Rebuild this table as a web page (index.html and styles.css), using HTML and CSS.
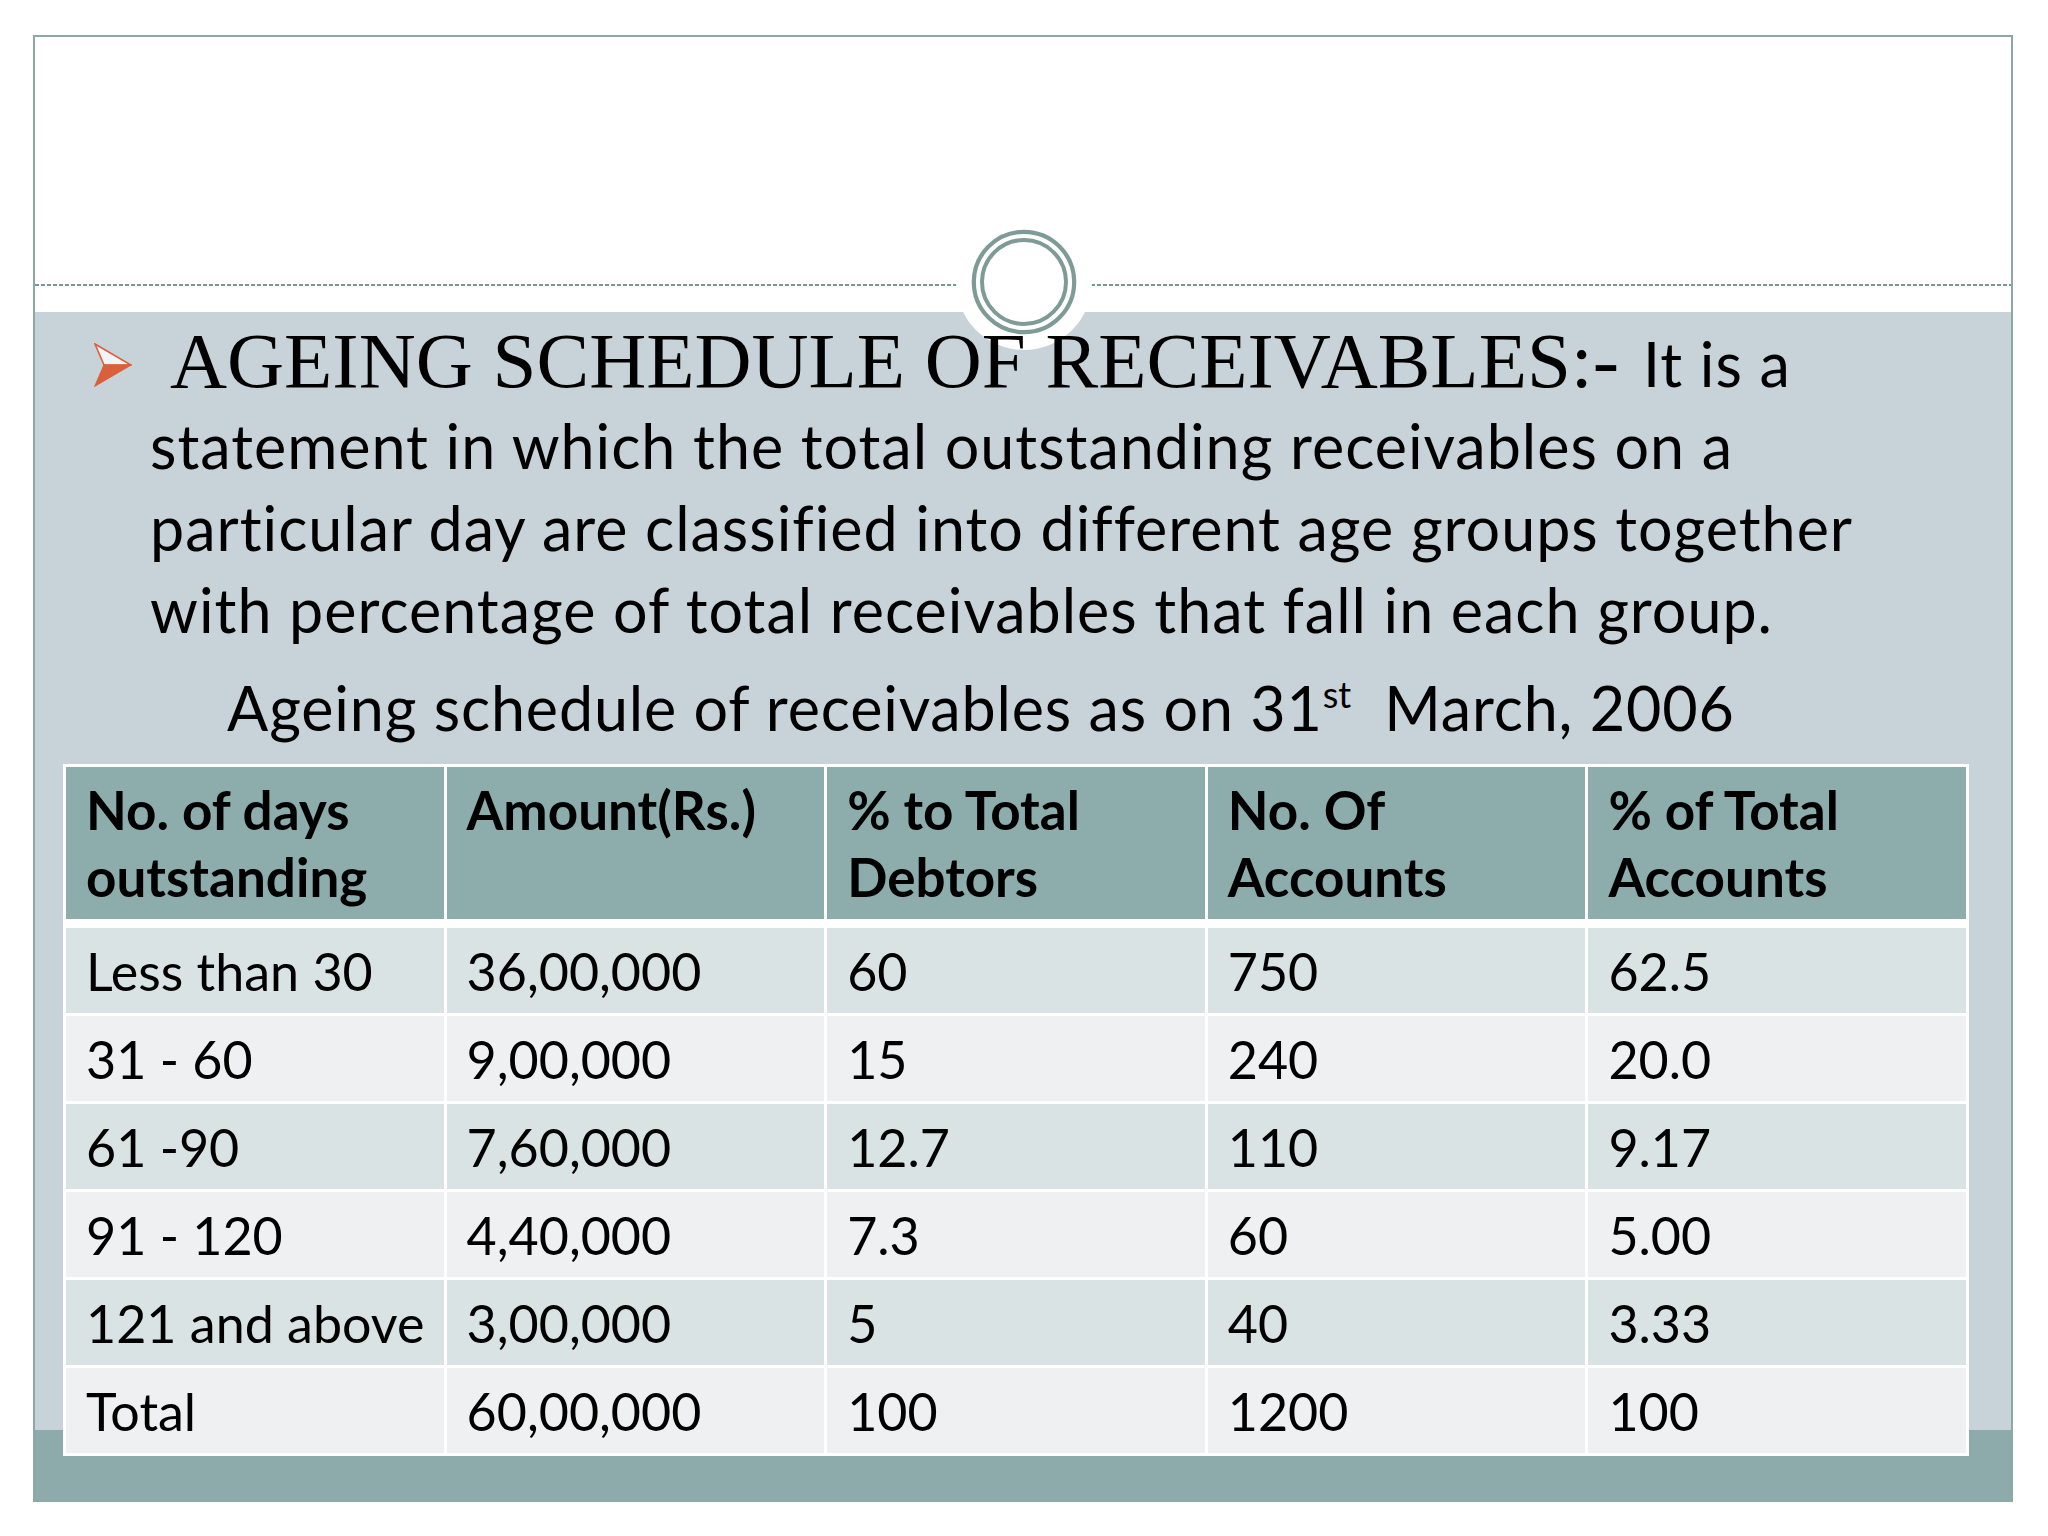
FILE: index.html
```html
<!DOCTYPE html>
<html>
<head>
<meta charset="utf-8">
<title>Ageing Schedule of Receivables</title>
<link rel="stylesheet" href="styles.css">
</head>
<body>
<div class="slide">
  <div class="header">
    <div class="dash"></div>
    <div class="halo">
      <svg width="136" height="136" viewBox="0 0 136 136">
        <circle cx="68" cy="68" r="50.2" fill="none" stroke="#7e9b95" stroke-width="4.2"/>
        <circle cx="68" cy="68" r="42" fill="none" stroke="#7e9b95" stroke-width="4"/>
      </svg>
    </div>
  </div>
  <div class="content">
    <p class="desc"><svg class="bullet" width="38" height="44" viewBox="0 0 38 44"><polygon points="1,1 37,22 10,22" fill="#f2f4f5" stroke="#d9603b" stroke-width="1.6" stroke-linejoin="miter"/><polygon points="10,22 37,22 1,43" fill="#d9603b" stroke="#d9603b" stroke-width="1.2"/></svg><span class="title">AGEING SCHEDULE OF RECEIVABLES:-</span><span class="lead">It is a</span> statement in which the total outstanding receivables on a particular day are classified into different age groups together with percentage of total receivables that fall in each group.</p>
    <p class="caption">Ageing schedule of receivables as on 31<sup>st</sup>&nbsp; March, 2006</p>
    <table class="ageing">
      <thead>
        <tr>
          <th>No. of days outstanding</th>
          <th>Amount(Rs.)</th>
          <th>% to Total Debtors</th>
          <th>No. Of Accounts</th>
          <th>% of Total Accounts</th>
        </tr>
      </thead>
      <tbody>
        <tr class="odd"><td>Less than 30</td><td>36,00,000</td><td>60</td><td>750</td><td>62.5</td></tr>
        <tr class="even"><td>31 - 60</td><td>9,00,000</td><td>15</td><td>240</td><td>20.0</td></tr>
        <tr class="odd"><td>61 -90</td><td>7,60,000</td><td>12.7</td><td>110</td><td>9.17</td></tr>
        <tr class="even"><td>91 - 120</td><td>4,40,000</td><td>7.3</td><td>60</td><td>5.00</td></tr>
        <tr class="odd"><td>121 and above</td><td>3,00,000</td><td>5</td><td>40</td><td>3.33</td></tr>
        <tr class="even"><td>Total</td><td>60,00,000</td><td>100</td><td>1200</td><td>100</td></tr>
      </tbody>
    </table>
  </div>
</div>
</body>
</html>
```

FILE: styles.css
```css
html, body {
  margin: 0;
  padding: 0;
  background: #ffffff;
}

body {
  width: 2048px;
  height: 1536px;
  overflow: hidden;
  font-family: Lato, "Liberation Sans", sans-serif;
  color: #000;
}

.slide {
  width: 1976px;
  height: 1463px;
  margin: 35px 0 0 33px;
  border: 2px solid #8ea8a4;
  background: linear-gradient(to bottom,
    #ffffff 0, #ffffff 275px,
    #c7d3d8 275px, #c7d3d8 1393px,
    #8dabab 1393px, #8dabab 100%);
  overflow: hidden;
}

.header {
  height: 275px;
  position: relative;
}

.dash {
  padding-top: 247px;
  height: 2px;
  background-clip: content-box;
  background-origin: content-box;
  background-image: repeating-linear-gradient(90deg, #7a9892 0, #7a9892 4px, transparent 4px, transparent 6px);
}

.halo {
  position: absolute;
  left: 921px;
  top: 177px;
  width: 136px;
  height: 136px;
  border-radius: 50%;
  background: #ffffff;
}

.halo svg {
  display: block;
}

.content {
  position: relative;
  padding-top: 8px;
}

.desc {
  margin: 0;
  padding-left: 115px;
  padding-right: 40px;
  text-indent: -56px;
  font-size: 61px;
  letter-spacing: 1px;
  line-height: 82px;
}

.bullet {
  display: inline-block;
  vertical-align: baseline;
  margin-right: 38px;
}

.title {
  font-family: "Liberation Serif", serif;
  font-size: 79px;
  letter-spacing: 0;
}

.lead {
  margin-left: 24px;
}

.caption {
  margin: 16px 0 0;
  padding-left: 192px;
  font-size: 61px;
  letter-spacing: 0.85px;
  line-height: 82px;
}

.caption sup {
  font-size: 36px;
  line-height: 0;
  vertical-align: 23px;
  letter-spacing: 0;
}

.ageing {
  margin: 15px 0 0 28px;
  width: 1906px;
  table-layout: fixed;
  border-collapse: separate;
  border-spacing: 3px;
  background: #ffffff;
}

.ageing th {
  height: 151px;
  box-sizing: border-box;
  padding: 9px 10px 9px 20px;
  border-bottom: 6px solid #ffffff;
  background: #8dacac;
  text-align: left;
  vertical-align: top;
  font-weight: 700;
  font-size: 53px;
  line-height: 67px;
}

.ageing td {
  height: 85px;
  box-sizing: border-box;
  padding: 0 10px 0 20px;
  vertical-align: middle;
  font-size: 52px;
  line-height: 60px;
  white-space: nowrap;
}

.ageing tr.odd td {
  background: #dae3e3;
}

.ageing tr.even td {
  background: #eef0f2;
}
```
